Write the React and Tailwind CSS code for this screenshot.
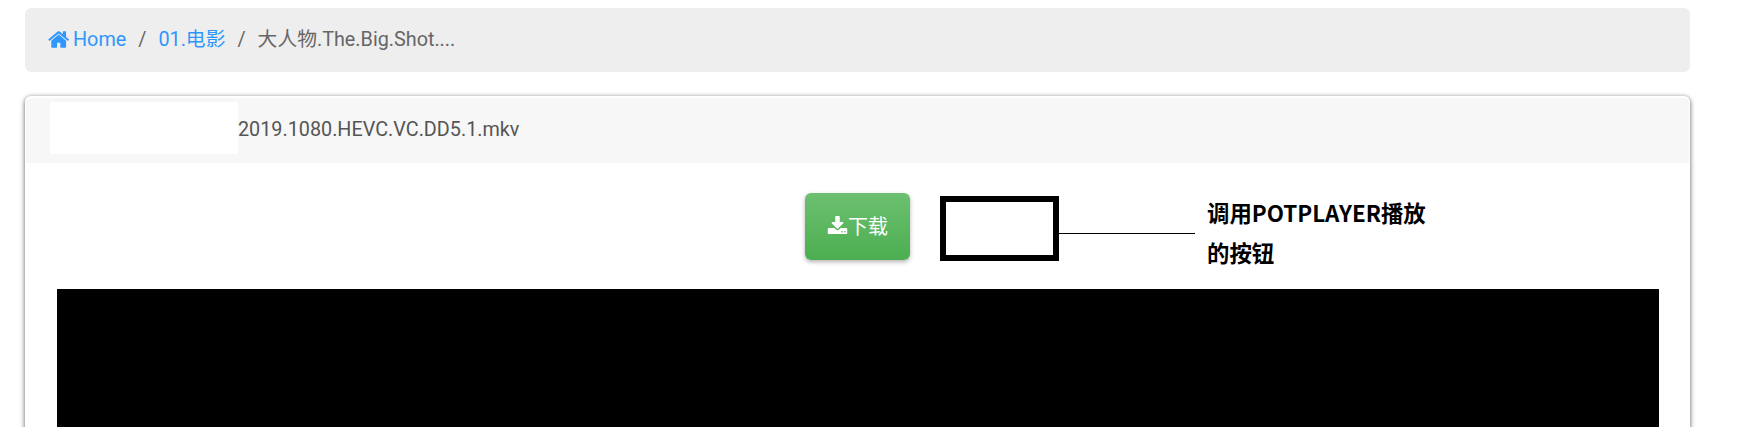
import React from 'react';

const HomeIcon = () => (
  <svg className="w-[23px] h-[23px] -ml-[1px]" viewBox="0 0 1792 1792" fill="currentColor">
    <path d="M1408 992v480q0 26-19 45t-45 19h-384v-384h-256v384h-384q-26 0-45-19t-19-45v-480q0-1 .5-3t.5-3l575-474 575 474q1 2 1 6zm223-69l-62 74q-8 9-21 11h-3q-13 0-21-7l-692-577-692 577q-12 8-24 7-13-2-21-11l-62-74q-8-10-7-23.5t11-21.5l719-599q32-26 76-26t76 26l244 204v-195q0-14 9-23t23-9h192q14 0 23 9t9 23v408l219 182q10 8 11 21.5t-7 23.5z" />
  </svg>
);

const DownloadIcon = () => (
  <svg className="w-[21px] h-[21px]" viewBox="0 0 1792 1792" fill="currentColor">
    <path d="M1344 1344q0-26-19-45t-45-19-45 19-19 45 19 45 45 19 45-19 19-45zm256 0q0-26-19-45t-45-19-45 19-19 45 19 45 45 19 45-19 19-45zm128-224v320q0 40-28 68t-68 28h-1472q-40 0-68-28t-28-68v-320q0-40 28-68t68-28h465l135 136q58 56 136 56t136-56l136-136h464q40 0 68 28t28 68zm-325-569q17 41-14 70l-448 448q-18 19-45 19t-45-19l-448-448q-31-29-14-70 17-39 59-39h256v-448q0-26 19-45t45-19h256q26 0 45 19t19 45v448h256q42 0 59 39z" />
  </svg>
);

const App = () => {
  return (
    <div className="h-screen overflow-hidden bg-white pl-[25px] pt-[8px] pr-[47px] font-['Roboto','Noto_Sans_CJK_SC',sans-serif] text-[19.8px]">
      <ol className="flex items-center h-[64px] pl-[24px] pb-[1px] rounded-[6px] bg-[#eeeeee] text-[#666]">
        <li>
          <a href="#" className="flex items-center gap-[2px] text-[#2f97fb]">
            <HomeIcon />
            Home
          </a>
        </li>
        <li className="px-[12px]">/</li>
        <li>
          <a href="#" className="text-[#2f97fb]">01.电影</a>
        </li>
        <li className="px-[12px]">/</li>
        <li>大人物.The.Big.Shot....</li>
      </ol>

      <div className="relative mt-[24px] h-[500px] rounded-[6px] bg-white pt-[2px] px-[1px] shadow-[0_1px_4px_rgba(0,0,0,0.5),0_2px_6px_rgba(0,0,0,0.2)]">
        <div className="flex h-[65px] pl-[24px] rounded-t-[5px] bg-[#f7f7f7] text-[#555]">
          <div className="mt-[4px] w-[188px] h-[52px] bg-white" />
          <span className="self-center pb-[1px]">2019.1080.HEVC.VC.DD5.1.mkv</span>
        </div>

        <div className="pl-[31px] pr-[30px] pt-[30px]">
          <div className="flex pl-[748px]">
            <button className="flex items-center justify-center w-[105px] h-[67px] rounded-[6px] bg-gradient-to-b from-[#6cc070] to-[#4cae50] text-[20px] text-white shadow-[0_2px_4px_rgba(0,0,0,0.3)]">
              <DownloadIcon />
              下载
            </button>
          </div>
          <div className="mt-[29px] h-[400px] bg-black" />
        </div>

        {/* annotation drawn over the player toolbar */}
        <div className="absolute left-[915px] top-[100px] w-[119px] h-[65px] border-[6px] border-black" />
        <div className="absolute left-[1034px] top-[137px] w-[136px] h-px bg-black" />
        <div className="absolute left-[1182px] top-[96px] w-[260px] text-[22.4px] leading-[40px] font-bold text-black font-['Noto_Sans_CJK_SC',sans-serif]">
          调用POTPLAYER播放
          <br />
          的按钮
        </div>
      </div>
    </div>
  );
};

export default App;
